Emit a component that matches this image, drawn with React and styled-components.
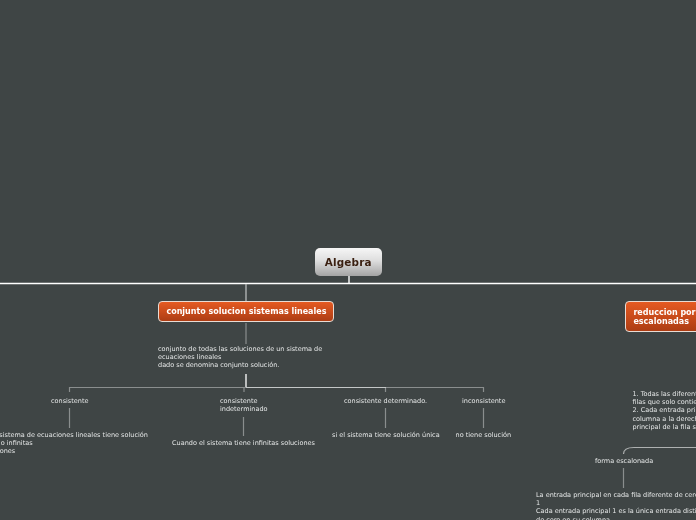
import styled, { createGlobalStyle } from 'styled-components';

const GlobalStyle = createGlobalStyle`
  html, body {
    margin: 0;
    padding: 0;
    background: #3f4545;
    overflow: hidden;
  }
`;

const Canvas = styled.div`
  position: relative;
  width: 696px;
  height: 520px;
  overflow: hidden;
  background: #3f4545;
  font-family: "DejaVu Sans", sans-serif;
`;

const Links = styled.svg`
  position: absolute;
  left: 0;
  top: 0;
`;

// own layer, transparent: text gets grey antialiasing like the map export
const NodeLayer = styled.div`
  position: absolute;
  inset: 0;
  will-change: transform;
`;

const RootNode = styled.div`
  position: absolute;
  left: 314.5px;
  top: 247.5px;
  width: 67.5px;
  height: 28.5px;
  box-sizing: border-box;
  display: flex;
  align-items: center;
  justify-content: center;
  border-radius: 5px;
  background: linear-gradient(#f6f6f6, #dedede 45%, #a4a4a4);
  color: #3a1f10;
  font-size: 10.4px;
  font-weight: bold;
  letter-spacing: 0.2px;
`;

const MainNode = styled.div`
  position: absolute;
  left: ${(p) => p.$x}px;
  top: ${(p) => p.$y}px;
  width: ${(p) => p.$w}px;
  height: ${(p) => p.$h}px;
  box-sizing: border-box;
  padding: 0 0 0 7.4px;
  display: flex;
  align-items: center;
  border: 1px solid #e9dcd4;
  border-radius: 4px;
  background: linear-gradient(#e55a22, #ad3d14);
  color: #fff;
  font-size: 8px;
  font-weight: bold;
  line-height: 9px;
  white-space: pre;
`;

const Note = styled.div`
  position: absolute;
  left: ${(p) => p.$x}px;
  top: ${(p) => p.$y}px;
  color: #e4e6e6;
  font-size: 6.5px;
  line-height: 8.2px;
  white-space: pre;
`;

const App = () => {
  return (
    <Canvas>
      <GlobalStyle />
      <Links width="696" height="520" fill="none">
        <g stroke="#fff" strokeWidth="1">
          <path d="M0 283.5H696" strokeWidth="1.3" />
          <path d="M349 276V284" strokeWidth="1.4" />
          <path d="M246 284V301" stroke="#b9bcbc" strokeWidth="1.3" />
          <path d="M246 374V387.5" strokeWidth="1.3" />
        </g>
        <g stroke="#8a8e8e" strokeWidth="1.2">
          <path d="M246 323V344" />
          <path d="M69.5 392V387.5H483.5V392" />
          <path d="M244 387.5V392" />
          <path d="M385.5 387.5V392" />
          <path d="M69.5 408V428" />
          <path d="M243.5 417V436" />
          <path d="M385.5 408V428" />
          <path d="M483.5 408V428" />
          <path d="M623.5 468V488" />
        </g>
        <path d="M623.5 454C623.5 449.5 627 447.5 634 447.5H696" stroke="#aeb1b1" strokeWidth="1.2" />
        <path d="M246 387.5H386" stroke="#c4c7c7" />
      </Links>

      <NodeLayer>
        <RootNode>Algebra</RootNode>
        <MainNode $x={158} $y={301} $w={176} $h={21}>conjunto solucion sistemas lineales</MainNode>
        <MainNode $x={625} $y={301} $w={100} $h={31}>{'reduccion por\nescalonadas'}</MainNode>

        <Note $x={158} $y={345}>{'conjunto de todas las soluciones de un sistema de\necuaciones lineales\ndado se denomina conjunto solución.'}</Note>
        <Note $x={51} $y={397}>consistente</Note>
        <Note $x={220} $y={397}>{'consistente\nindeterminado'}</Note>
        <Note $x={344} $y={397}>consistente determinado.</Note>
        <Note $x={462} $y={397}>inconsistente</Note>
        <Note $x={-19} $y={431}>{'Si un sistema de ecuaciones lineales tiene solución\núnica o infinitas\nsoluciones'}</Note>
        <Note $x={172} $y={439}>Cuando el sistema tiene infinitas soluciones</Note>
        <Note $x={332} $y={431}>si el sistema tiene solución única</Note>
        <Note $x={455.6} $y={431}>no tiene solución</Note>
        <Note $x={632.4} $y={390}>{'1. Todas las diferentes de cero están arriba de las\nfilas que solo contienen ceros\n2. Cada entrada principal está en una\ncolumna a la derecha de la entrada\nprincipal de la fila superior'}</Note>
        <Note $x={595} $y={457}>forma escalonada</Note>
        <Note $x={536} $y={491}>{'La entrada principal en cada fila diferente de cero es\n1\nCada entrada principal 1 es la única entrada distinta\nde cero en su columna'}</Note>
      </NodeLayer>
    </Canvas>
  );
};

export default App;
